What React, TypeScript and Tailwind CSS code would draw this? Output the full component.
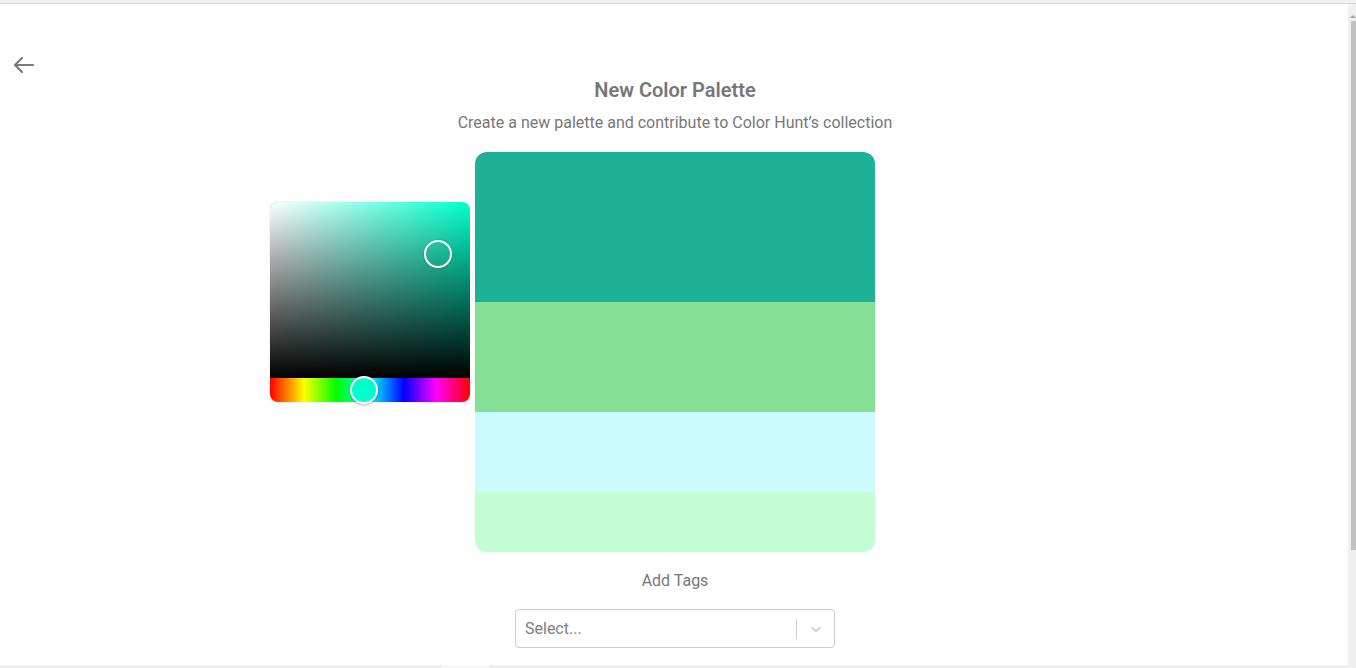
import React from "react";

export default function App() {
  const hue = "hsl(168, 100%, 50%)";
  return (
    <div className="relative h-[668px] w-[1356px] overflow-hidden bg-white" style={{ fontFamily: "Roboto, 'Liberation Sans', sans-serif" }}>
      {/* top browser strip */}
      <div className="h-[3px] w-full bg-[#f0f0f0]" />
      <div className="h-px w-full bg-[#d6d6d6]" />
      <div className="flex h-[661px]">
        <div className="relative w-[1348px]">
          {/* back arrow */}
          <div className="absolute left-[12px] top-[49px]">
            <svg width="24" height="24" viewBox="0 0 24 24" fill="none" stroke="#7a7a7a" strokeWidth="2.2" strokeLinecap="round" strokeLinejoin="round">
              <path d="M21 12H4" />
              <path d="M10 5l-7 7 7 7" />
            </svg>
          </div>
          <div className="flex flex-col items-center pl-[2px]">
            <h1 className="mt-[74px] text-[20px] font-semibold leading-[24px] text-[#777777]">New Color Palette</h1>
            <p className="mt-[11px] text-[16px] leading-[20px] text-[#777777]">Create a new palette and contribute to Color Hunt’s collection</p>
            <div className="relative mt-[19px]">
              {/* color picker popover */}
              <div className="absolute left-[-205px] top-[50px] h-[200px] w-[200px] overflow-hidden rounded-[8px] shadow-[0_0_2px_rgba(0,0,0,0.15)]">
                <div className="relative h-[176px] w-full" style={{ background: hue }}>
                  <div className="absolute inset-0 bg-gradient-to-r from-white to-transparent" />
                  <div className="absolute inset-0 bg-gradient-to-t from-black to-transparent" />
                  <div className="absolute left-[154px] top-[38px] h-[28px] w-[28px] rounded-full border-2 border-white shadow-[0_0_2px_rgba(0,0,0,0.3)]" />
                </div>
                <div className="relative h-[24px] w-full bg-[linear-gradient(to_right,#f00_0%,#ff0_17%,#0f0_33%,#0ff_50%,#00f_67%,#f0f_83%,#f00_100%)]" />
              </div>
              <div className="absolute left-[-125px] top-[224px] h-[28px] w-[28px] rounded-full border-2 border-white bg-[#00ffcf] shadow-[0_1px_3px_rgba(0,0,0,0.3)]" />
              {/* palette */}
              <div className="flex h-[400px] w-[400px] flex-col overflow-hidden rounded-[12px]">
                <div className="h-[150px] bg-[#1db198]" />
                <div className="h-[110px] bg-[#85e096]" />
                <div className="h-[80px] bg-[#cbfafd]" />
                <div className="flex-1 bg-[#c2fdd4]" />
              </div>
            </div>
            <div className="mt-[19px] text-[16px] leading-[20px] text-[#777777]">Add Tags</div>
            <div className="mt-[18px] flex h-[39px] w-[320px] items-center rounded-[4px] border border-[#cccccc] bg-white">
              <span className="flex-1 pl-[9px] text-[16px] text-[#808080]">Select...</span>
              <div className="h-[20px] w-px bg-[#cccccc]" />
              <div className="flex w-[37px] items-center justify-center">
                <svg width="16" height="16" viewBox="0 0 20 20" fill="#cccccc">
                  <path d="M4.516 7.548c0.436-0.446 1.043-0.481 1.576 0l3.908 3.747 3.908-3.747c0.533-0.481 1.141-0.446 1.574 0 0.436 0.445 0.408 1.197 0 1.615-0.406 0.418-4.695 4.502-4.695 4.502-0.217 0.223-0.502 0.335-0.787 0.335s-0.57-0.112-0.789-0.335c0 0-4.287-4.084-4.695-4.502s-0.436-1.170 0-1.615z" />
                </svg>
              </div>
            </div>
          </div>
        </div>
        {/* scrollbar */}
        <div className="relative w-[8px] bg-[#f0f0f0]">
          <div className="absolute left-[2px] top-[11px] h-0 w-0 border-x-[3px] border-b-[3px] border-x-transparent border-b-[#a3a3a3]" />
          <div className="absolute left-[3px] right-0 top-[17px] h-[529px] bg-[#c1c1c1]" />
        </div>
      </div>
      {/* bottom strip */}
      <div className="flex h-[3px] w-full bg-[#efefef]">
        <div className="ml-[442px] h-full w-[48px] bg-[#f8f8f8]" />
      </div>
    </div>
  );
}
